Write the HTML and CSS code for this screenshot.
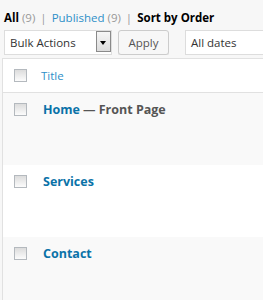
FILE: index.html
```html
<!DOCTYPE html>
<html lang="en">
<head>
  <meta charset="UTF-8">
  <title>Pages</title>
  <link rel="stylesheet" href="styles.css">
</head>
<body>
  <ul class="subsubsub">
    <li class="current">All <span class="count">(9)</span></li>
    <li class="sep">|</li>
    <li><a href="#">Published</a> <span class="count">(9)</span></li>
    <li class="sep">|</li>
    <li class="current">Sort by Order</li>
  </ul>

  <div class="tablenav">
    <div class="select select--bulk">
      <span class="select__label">Bulk Actions</span>
      <span class="select__arrow"></span>
    </div>
    <button class="button">Apply</button>
    <div class="select select--dates">
      <span class="select__label">All dates</span>
    </div>
  </div>

  <div class="list">
    <div class="row row--head">
      <div class="check"><span class="checkbox"></span></div>
      <div class="title"><a href="#" class="title__sort">Title</a></div>
    </div>
    <div class="row row--alt">
      <div class="check"><span class="checkbox"></span></div>
      <div class="title"><a href="#" class="row-title">Home</a> <span class="state">&mdash; Front Page</span></div>
    </div>
    <div class="row">
      <div class="check"><span class="checkbox"></span></div>
      <div class="title"><a href="#" class="row-title">Services</a></div>
    </div>
    <div class="row row--alt">
      <div class="check"><span class="checkbox"></span></div>
      <div class="title"><a href="#" class="row-title">Contact</a></div>
    </div>
  </div>
</body>
</html>
```

FILE: styles.css
```css
body{
  margin: 0;
  background: #f7f7f7;
  font-family: "Open Sans", "DejaVu Sans", sans-serif;
  font-size: 11.5px;
  color: #333;
  overflow: hidden;
}

a{
  color: #2e8fc8;
  text-decoration: none;
}

.subsubsub{
  list-style: none;
  margin: 0;
  padding: 7px 0 0 4px;
  height: 21px;
  display: flex;
  gap: 5px;
  line-height: 21px;
  white-space: nowrap;
}
.subsubsub .current{
  font-weight: 700;
  color: #000;
}
.subsubsub .count{
  font-weight: 400;
  color: #999;
}
.subsubsub .sep{
  color: #999;
}

.tablenav{
  display: flex;
  align-items: center;
  padding: 2px 0 0 4px;
  height: 25px;
  white-space: nowrap;
  overflow: hidden;
}

.select{
  box-sizing: border-box;
  height: 25px;
  border: 1px solid #ddd;
  background: #fff;
  display: flex;
  align-items: center;
  color: #333;
  position: relative;
  flex-shrink: 0;
}
.select__label{
  padding-left: 5px;
}
.select--bulk{
  width: 108px;
}
.select__arrow{
  position: absolute;
  right: 0;
  top: 0;
  width: 15px;
  height: 21px;
  box-sizing: border-box;
  border: 1px solid #8a8a8a;
  background: linear-gradient(#f6f6f6, #dcdcdc);
}
.select__arrow::after{
  content: "";
  position: absolute;
  left: 3px;
  top: 9px;
  border-left: 3.5px solid transparent;
  border-right: 3.5px solid transparent;
  border-top: 4px solid #000;
}
.select--dates{
  width: 100px;
  margin-left: 16px;
}

.button{
  box-sizing: border-box;
  flex-shrink: 0;
  height: 25px;
  width: 51px;
  margin-left: 6px;
  padding: 0;
  border: 1px solid #ccc;
  border-radius: 3px;
  background: #f7f7f7;
  box-shadow: 0 1px 0 #e4e4e4;
  font-family: inherit;
  font-size: 11.5px;
  color: #555;
}

.list{
  margin: 3px 0 0 2px;
  border-top: 1px solid #e1e1e1;
  border-left: 1px solid #e1e1e1;
}

.row{
  display: flex;
  height: 72px;
  background: #fff;
  box-sizing: border-box;
  padding-top: 8px;
}
.row--head{
  height: 34px;
  padding-top: 8px;
  border-bottom: 1px solid #e1e1e1;
}
.row--alt{
  background: #f9f9f9;
}

.check{
  width: 38px;
  padding-left: 11px;
  box-sizing: border-box;
  flex-shrink: 0;
}
.checkbox{
  display: block;
  width: 13px;
  height: 13px;
  box-sizing: border-box;
  border: 1px solid #b4b9be;
  background: linear-gradient(#dcdcdc, #fcfcfc);
  margin-top: 2px;
}

.title{
  line-height: 17px;
}
.row-title{
  font-size: 12.5px;
  font-weight: 700;
  color: #0a72a8;
  margin-left: 2px;
}
.state{
  font-size: 12.5px;
  font-weight: 700;
  color: #555;
}
```
